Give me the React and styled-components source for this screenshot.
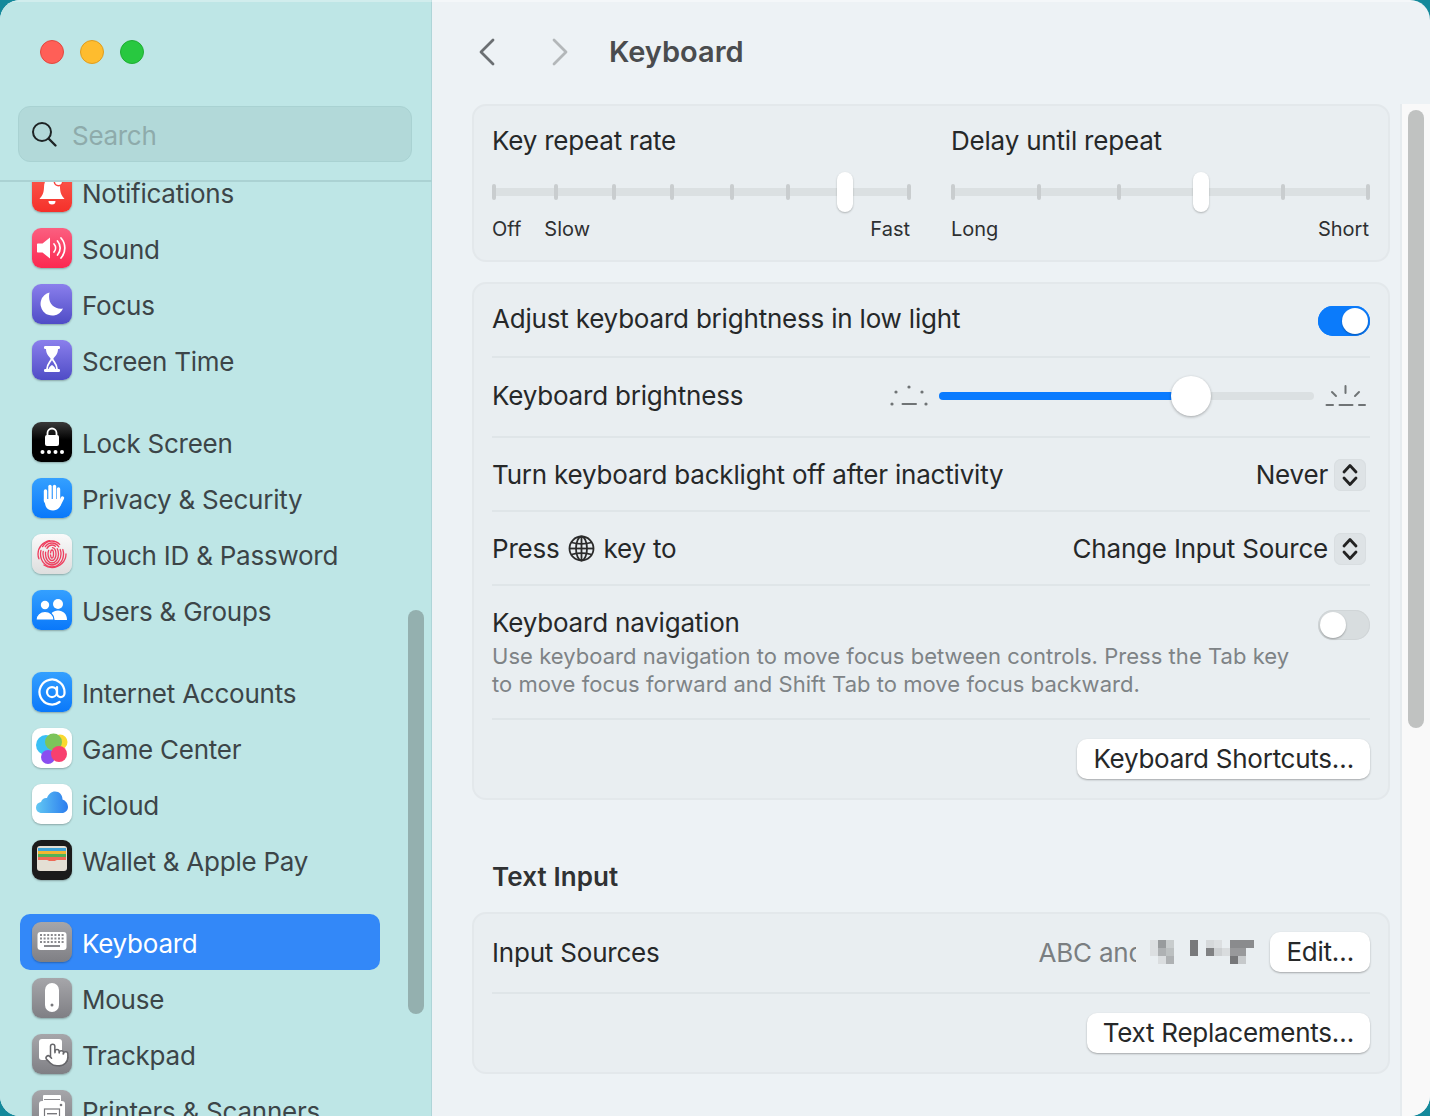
import styled, { createGlobalStyle } from 'styled-components'
import { AtSign, Pointer } from 'lucide-react'

const GlobalStyle = createGlobalStyle`
  html, body {
    margin: 0;
    padding: 0;
    background: #14899b;
    font-family: Inter, "Liberation Sans", sans-serif;
    -webkit-font-smoothing: antialiased;
  }
  * { box-sizing: border-box; }
`

// sidebar icon drawings, all on a 40x40 tile
const Svg = ({ children }) => <svg width="40" height="40" viewBox="0 0 40 40">{children}</svg>

const BellIcon = () => (
  <Svg>
    <path d="M20 5C14.500 5 12 10 12 15c0 6-2 9-4.500 12h25C30 24 28 21 28 15c0-5-2.500-10-8-10Z" fill="#fff" />
    <path d="M16.500 29h7a3.500 3.500 0 0 1-7 0Z" fill="#fff" />
    <circle cx="26.500" cy="9.500" r="4.200" fill="#fff" stroke="#f8443c" strokeWidth="1.500" />
  </Svg>
)
const SoundIcon = () => (
  <Svg>
    <path d="M6 15.500h4.500L18 9.500v21l-7.500-6H6c-.6 0-1-.4-1-1v-7c0-.6.4-1 1-1Z" fill="#fff" />
    <g fill="none" stroke="#fff" strokeWidth="1.700" strokeLinecap="round">
      <path d="M22 16a6 6 0 0 1 0 8" />
      <path d="M25.500 13a10.500 10.500 0 0 1 0 14" />
      <path d="M29 10a15 15 0 0 1 0 20" />
    </g>
  </Svg>
)
const MoonIcon = () => (
  <Svg>
    <path d="M17.500 8.500A11.700 11.700 0 1 0 31 24.500C23 26 15 20 17.500 8.500Z" fill="#fff" />
  </Svg>
)
const HourglassIcon = () => (
  <Svg>
    <rect x="12" y="6" width="16" height="3" rx="1.200" fill="#fff" />
    <rect x="12" y="29" width="16" height="3" rx="1.200" fill="#fff" />
    <path d="M14 9h12c0 6-4 8-5 10h-2c-1-2-5-4-5-10Z" fill="#fff" />
    <path d="M15 29c0-5 3.500-7 4.500-10h1c1 3 4.500 5 4.500 10" fill="none" stroke="#fff" strokeWidth="1.800" />
    <path d="M16.500 29c.5-2 2-3 3.500-4 1.500 1 3 2 3.500 4Z" fill="#fff" />
  </Svg>
)
const LockIcon = () => (
  <Svg>
    <path d="M15.500 14v-3a4.500 4.500 0 0 1 9 0v3" fill="none" stroke="#fff" strokeWidth="1.800" />
    <rect x="13" y="13" width="14" height="11" rx="2" fill="#fff" />
    {[10.500, 17, 23.500, 30].map(x => <circle key={x} cx={x} cy="30" r="2" fill="#fff" />)}
  </Svg>
)
const HandIcon = () => (
  <Svg>
    <g stroke="#fff" strokeWidth="3.400" strokeLinecap="round">
      <path d="M13.500 13v10" />
      <path d="M18 8.500v13" />
      <path d="M22.500 8.500v13" />
      <path d="M26.500 11v12" />
      <path d="M27 27l3.500-7" />
    </g>
    <path d="M11.800 21H28.500v5c0 4-3.500 6.500-7.500 6.500-4.500 0-6.500-2-7.500-5Z" fill="#fff" />
  </Svg>
)
const FingerprintIcon = () => (
  <Svg>
    <g fill="none" stroke="#ee3f5f" strokeWidth="1.300" strokeLinecap="round">
      <ellipse cx="20" cy="20" rx="1.500" ry="4" strokeDasharray="8 2" />
      <ellipse cx="20" cy="20" rx="4" ry="6.500" strokeDasharray="20 5" />
      <ellipse cx="20" cy="20" rx="6.500" ry="9" strokeDasharray="26 4 10 3" />
      <ellipse cx="20" cy="20" rx="9" ry="11" strokeDasharray="34 5 16 3" />
      <ellipse cx="20" cy="20" rx="11.500" ry="13" strokeDasharray="42 4 20 6" />
      <ellipse cx="20" cy="20" rx="14" ry="13.500" strokeDasharray="30 8 24 26" />
    </g>
  </Svg>
)
const UsersIcon = () => (
  <Svg>
    <circle cx="26" cy="14" r="5" fill="#fff" />
    <path d="M17 30c0-6 4-9.500 9-9.500s9 3.500 9 9.500Z" fill="#fff" />
    <circle cx="13" cy="15" r="4.200" fill="#fff" />
    <path d="M4 30c0-5.500 4-8.500 9-8.500s9 3 9 8.500Z" fill="#fff" stroke="#1484fd" strokeWidth="1.200" />
  </Svg>
)
const GameCenterIcon = () => (
  <Svg>
    <circle cx="14" cy="17" r="10" fill="#3ac0f5" />
    <circle cx="16" cy="29" r="7" fill="#8a4df0" />
    <circle cx="28" cy="14" r="7.500" fill="#f9d92f" />
    <circle cx="21.500" cy="14" r="8.500" fill="#7cc45a" />
    <circle cx="27" cy="26" r="8" fill="#f8406f" />
  </Svg>
)
const CloudIcon = () => (
  <Svg>
    <defs>
      <linearGradient id="cloud" x1="0" y1="0" x2="1" y2="0">
        <stop offset="0" stopColor="#62c8f3" />
        <stop offset="1" stopColor="#2c7dee" />
      </linearGradient>
    </defs>
    <path
      d="M10 29C6 29 4 26.500 4 23.500 4 20.500 6 18.500 9 18c1-3 3.500-4.500 6-4 1.500-4 4.500-6.500 8-6.500 4.500 0 7.500 3.500 7.500 8 3 1 5.500 4 5.500 7.500S33 29 30 29Z"
      fill="url(#cloud)"
    />
  </Svg>
)
const WalletIcon = () => (
  <Svg>
    <rect x="5" y="6" width="30" height="25" rx="3" fill="#e4dfd4" />
    <rect x="6" y="8" width="28" height="3" fill="#3fa4d8" />
    <rect x="6" y="11" width="28" height="3" fill="#f2b632" />
    <rect x="6" y="14" width="28" height="3" fill="#53b257" />
    <rect x="6" y="17" width="28" height="4" fill="#ee6a56" />
    <path d="M6 20h9c2 0 3 3.500 5 3.500s3-3.500 5-3.500h9v10H6Z" fill="#e4dfd4" />
  </Svg>
)
const KeyboardIcon = () => (
  <Svg>
    <rect x="5.500" y="10" width="29" height="18" rx="3" fill="#fff" />
    {[13, 16.500, 20].map(y =>
      [9, 12.600, 16.200, 19.800, 23.400, 27, 30.600].map(x => (
        <rect key={`${x}-${y}`} x={x - 1} y={y - 1} width="2" height="2" fill="#8a8a8e" />
      ))
    )}
    <rect x="12" y="23" width="16" height="2" fill="#8a8a8e" />
  </Svg>
)
const MouseIcon = () => (
  <Svg>
    <rect x="13" y="5" width="14" height="29" rx="7" fill="#fff" />
    <circle cx="20" cy="27" r="1.500" fill="#77777b" />
  </Svg>
)
const TrackpadIcon = () => (
  <Svg>
    <rect x="7" y="5" width="23" height="21" rx="3" fill="#fff" />
    <Pointer x="12" y="8" width="26" height="26" color="#66666a" fill="#fff" strokeWidth={1.400} />
  </Svg>
)
const PrinterIcon = () => (
  <Svg>
    <rect x="11" y="5" width="18" height="9" rx="1" fill="#fff" />
    <rect x="7" y="11" width="26" height="19" rx="3" fill="#fff" />
    <rect x="12" y="9" width="16" height="1" fill="#8a8a8e" />
    <rect x="12.500" y="19" width="15" height="14" fill="#fff" stroke="#77777b" strokeWidth="1.200" />
    <rect x="15" y="23" width="10" height="1.400" fill="#77777b" />
    <rect x="15" y="26.500" width="10" height="1.400" fill="#77777b" />
    <circle cx="29" cy="15" r="1.300" fill="#77777b" />
  </Svg>
)
const AtIcon = () => <AtSign size={30} color="#fff" strokeWidth={1.800} />

const grey = 'linear-gradient(#a6a6aa, #7f7f84)'
const blue = 'linear-gradient(#34a0ff, #0a78fa)'
const violet = 'linear-gradient(#8a7fec, #4f4cc6)'

const menuGroups = [
  [
    { label: 'Notifications', bg: 'linear-gradient(#fb5c4f, #f5302a)', Icon: BellIcon },
    { label: 'Sound', bg: 'linear-gradient(#fb5f80, #fc2850)', Icon: SoundIcon },
    { label: 'Focus', bg: violet, Icon: MoonIcon },
    { label: 'Screen Time', bg: violet, Icon: HourglassIcon }
  ],
  [
    { label: 'Lock Screen', bg: 'linear-gradient(#3a3a3a, #000 45%)', Icon: LockIcon },
    { label: 'Privacy & Security', bg: blue, Icon: HandIcon },
    { label: 'Touch ID & Password', bg: 'linear-gradient(#fafafa, #dedede)', Icon: FingerprintIcon },
    { label: 'Users & Groups', bg: blue, Icon: UsersIcon }
  ],
  [
    { label: 'Internet Accounts', bg: blue, Icon: AtIcon },
    { label: 'Game Center', bg: '#fff', Icon: GameCenterIcon },
    { label: 'iCloud', bg: '#fff', Icon: CloudIcon },
    { label: 'Wallet & Apple Pay', bg: '#1b1b1b', Icon: WalletIcon }
  ],
  [
    { label: 'Keyboard', bg: grey, Icon: KeyboardIcon, selected: true },
    { label: 'Mouse', bg: grey, Icon: MouseIcon },
    { label: 'Trackpad', bg: grey, Icon: TrackpadIcon },
    { label: 'Printers & Scanners', bg: grey, Icon: PrinterIcon }
  ]
]

const repeatSlider = { ticks: [2, 64, 122, 180, 240, 296, 417], thumb: 353 }
const delaySlider = { ticks: [2, 88, 168, 332, 417], thumb: 250 }

// blurred-out part of the input source name
const mosaic = [
  [0, 0, 1, 1, '#dcdfe1'], [1, 0, 1, 1, '#989b9d'], [2, 0, 1, 1, '#c8cccd'],
  [0, 1, 1, 1, '#dcdfe1'], [1, 1, 1, 1, '#aeb1b3'], [2, 1, 1, 1, '#bcc0c1'],
  [1, 2, 1, 1, '#dadddf'], [2, 2, 1, 1, '#aeb1b3'],
  [5, 0, 1, 2, '#78797b'],
  [7, 0, 1, 1, '#d5d8da'], [8, 0, 1, 1, '#dcdfe1'], [10, 0, 3, 1, '#8a8b8d'],
  [7, 1, 1, 1, '#808183'], [8, 1, 1, 1, '#cdd0d2'], [9, 1, 1, 1, '#d9dcde'], [10, 1, 2, 1, '#98999b'],
  [10, 2, 1, 1, '#767779'], [11, 2, 1, 1, '#c6c9cb']
]

const Chevron = ({ points, color }) => (
  <svg width="18" height="30" viewBox="0 0 18 30">
    <polyline points={points} fill="none" stroke={color} strokeWidth="2.800" strokeLinecap="round" strokeLinejoin="round" />
  </svg>
)

const UpDown = () => (
  <svg width="16" height="24" viewBox="0 0 16 24">
    <g fill="none" stroke="#222" strokeWidth="2.800" strokeLinecap="round" strokeLinejoin="round">
      <polyline points="2,9 8,2.500 14,9" />
      <polyline points="2,15 8,21.500 14,15" />
    </g>
  </svg>
)

const GlobeIcon = () => (
  <svg width="27" height="27" viewBox="0 0 27 27">
    <g fill="none" stroke="#2b2b2b" strokeWidth="1.800">
      <circle cx="13.500" cy="13.500" r="12" />
      <ellipse cx="13.500" cy="13.500" rx="5.500" ry="12" />
      <path d="M13.500 1.500v24" />
      <path d="M1.500 13.500h24" />
      <path d="M3.500 7.500c6 1.600 14 1.600 20 0" />
      <path d="M3.500 19.500c6-1.600 14-1.600 20 0" />
    </g>
  </svg>
)

const DimSun = () => (
  <svg width="40" height="24" viewBox="-2 0 40 24">
    <g fill="#6f7375">
      <circle cx="19" cy="3" r="1.600" />
      <circle cx="6" cy="8" r="1.600" />
      <circle cx="32" cy="8" r="1.600" />
      <circle cx="2" cy="20" r="1.600" />
      <circle cx="36" cy="20" r="1.600" />
      <rect x="11.500" y="19" width="15.500" height="2" rx="1" />
    </g>
  </svg>
)

const BrightSun = () => (
  <svg width="42" height="24" viewBox="0 0 42 24">
    <g stroke="#6f7375" strokeWidth="2" strokeLinecap="round" fill="none">
      <path d="M20.500 2v7" />
      <path d="M7 8l4 4" />
      <path d="M34 8l-4 4" />
      <path d="M1.500 21h6.500" />
      <path d="M14.500 21h13" />
      <path d="M34 21h6" />
    </g>
  </svg>
)

function TickSlider ({ ticks, thumb }) {
  return (
    <SliderBox>
      <TickTrack />
      {ticks.map(x => <Tick key={x} style={{ left: x }} />)}
      <TickThumb style={{ left: thumb }} />
    </SliderBox>
  )
}

export default function App () {
  const brightness = 252
  return (
    <>
      <GlobalStyle />
      <Window>
        <Sidebar>
          <Lights>
            <Light $color="#ff5f57" $edge="#e2483f" />
            <Light $color="#febc2e" $edge="#df9d1f" />
            <Light $color="#28c840" $edge="#1fae33" />
          </Lights>
          <SearchBox>
            <svg width="27" height="27" viewBox="0 0 27 27">
              <circle cx="11" cy="11" r="9" fill="none" stroke="#1e2425" strokeWidth="2" />
              <path d="M17.500 17.500l7 7" stroke="#1e2425" strokeWidth="2.400" strokeLinecap="round" />
            </svg>
            <SearchText>Search</SearchText>
          </SearchBox>
          <MenuScroll>
            {menuGroups.map((group, i) => (
              <MenuGroup key={i}>
                {group.map(({ label, bg, Icon, selected }) => (
                  <MenuItem key={label} $selected={selected}>
                    <IconTile $bg={bg}><Icon /></IconTile>
                    <MenuLabel>{label}</MenuLabel>
                  </MenuItem>
                ))}
              </MenuGroup>
            ))}
          </MenuScroll>
          <SideThumb />
        </Sidebar>

        <Main>
          <Header>
            <Chevron points="15,3 3,15 15,27" color="#6b6f72" />
            <Chevron points="3,3 15,15 3,27" color="#b3b7b9" />
            <Title>Keyboard</Title>
          </Header>
          <Body>
            <Content>
              <Panel $height={158}>
                <SliderGrid>
                  <div>
                    <SliderTitle>Key repeat rate</SliderTitle>
                    <TickSlider {...repeatSlider} />
                    <SliderLabels>
                      <LabelPair><span>Off</span><span>Slow</span></LabelPair>
                      <span>Fast</span>
                    </SliderLabels>
                  </div>
                  <div>
                    <SliderTitle>Delay until repeat</SliderTitle>
                    <TickSlider {...delaySlider} />
                    <SliderLabels>
                      <span>Long</span>
                      <span>Short</span>
                    </SliderLabels>
                  </div>
                </SliderGrid>
              </Panel>

              <Panel $gap={20}>
                <Row $height={74}>
                  <RowLabel $lift={4}>Adjust keyboard brightness in low light</RowLabel>
                  <Toggle $on $drop={2} />
                </Row>
                <Row $height={80}>
                  <RowLabel $lift={4}>Keyboard brightness</RowLabel>
                  <BrightnessControl>
                    <DimSun />
                    <BrightnessTrack>
                      <BrightnessFill style={{ width: brightness }} />
                      <BrightnessKnob style={{ left: brightness }} />
                    </BrightnessTrack>
                    <BrightSun />
                  </BrightnessControl>
                </Row>
                <Row $height={74}>
                  <RowLabel>Turn keyboard backlight off after inactivity</RowLabel>
                  <SelectValue>Never<Stepper><UpDown /></Stepper></SelectValue>
                </Row>
                <Row $height={74}>
                  <PressLabel>Press <GlobeIcon /> key to</PressLabel>
                  <SelectValue>Change Input Source<Stepper><UpDown /></Stepper></SelectValue>
                </Row>
                <NavRow>
                  <div>
                    <NavTitle>Keyboard navigation</NavTitle>
                    <NavText>
                      Use keyboard navigation to move focus between controls. Press the Tab key
                      to move focus forward and Shift Tab to move focus backward.
                    </NavText>
                  </div>
                  <Toggle />
                </NavRow>
                <Row $height={78} $last $end>
                  <PushButton>Keyboard Shortcuts…</PushButton>
                </Row>
              </Panel>

              <SectionTitle>Text Input</SectionTitle>

              <Panel>
                <Row $height={80}>
                  <RowLabel $lift={2}>Input Sources</RowLabel>
                  <SourceValue>
                    <SourceText>ABC and</SourceText>
                    <MosaicBox width="104" height="24" viewBox="0 0 104 24">
                      {mosaic.map(([x, y, w, h, fill]) => (
                        <rect key={`${x}-${y}`} x={x * 8} y={y * 8} width={w * 8} height={h * 8} fill={fill} />
                      ))}
                    </MosaicBox>
                    <PushButton>Edit…</PushButton>
                  </SourceValue>
                </Row>
                <Row $height={78} $last $end>
                  <PushButton>Text Replacements…</PushButton>
                </Row>
              </Panel>
            </Content>
            <ScrollTrack>
              <ScrollThumb />
            </ScrollTrack>
          </Body>
        </Main>
      </Window>
    </>
  )
}

const Window = styled.div`
  display: flex;
  width: 1430px;
  height: 1116px;
  overflow: hidden;
  border-radius: 20px;
  background: #edf2f5;
`
const Sidebar = styled.aside`
  position: relative;
  display: flex;
  flex-direction: column;
  flex: 0 0 432px;
  background: #bee6e6;
  box-shadow: inset 0 2px 0 rgba(255, 255, 255, 0.3), inset -1px 0 0 #aed5d8;
`
const Lights = styled.div`
  display: flex;
  gap: 16px;
  padding: 40px 0 0 40px;
`
const Light = styled.span`
  width: 24px;
  height: 24px;
  border-radius: 50%;
  background: ${p => p.$color};
  border: 1px solid ${p => p.$edge};
`
const SearchBox = styled.div`
  display: flex;
  align-items: center;
  gap: 14px;
  width: 394px;
  height: 56px;
  margin: 42px 0 0 18px;
  padding: 0 14px 0 12px;
  background: #b2d9d9;
  border: 1px solid #a9d2d2;
  border-radius: 12px;
`
const SearchText = styled.span`
  margin-top: 2px;
  font-size: 26px;
  letter-spacing: -0.3px;
  color: #8eabab;
`
const MenuScroll = styled.nav`
  flex: 1;
  min-height: 0;
  margin-top: 18px;
  overflow: hidden;
  border-top: 2px solid #abd2d3;
`
const MenuGroup = styled.div`
  margin: 0 0 26px 20px;
  &:first-child {
    margin-top: -18px;
  }
`
const MenuItem = styled.div`
  display: flex;
  align-items: center;
  gap: 10px;
  width: 360px;
  height: 56px;
  padding-left: 12px;
  border-radius: 10px;
  font-size: 26px;
  letter-spacing: -0.24px;
  color: ${p => (p.$selected ? '#fff' : '#3c4548')};
  background: ${p => (p.$selected ? '#3388f8' : 'transparent')};
`
const MenuLabel = styled.span`
  margin-top: 2px;
  white-space: nowrap;
`
const IconTile = styled.span`
  display: flex;
  align-items: center;
  justify-content: center;
  flex: none;
  width: 40px;
  height: 40px;
  border-radius: 9px;
  background: ${p => p.$bg};
  box-shadow: 0 1px 2px rgba(0, 0, 0, 0.28);
`
const SideThumb = styled.div`
  position: absolute;
  top: 610px;
  left: 408px;
  width: 16px;
  height: 404px;
  border-radius: 8px;
  background: #94b0af;
`
const Main = styled.main`
  display: flex;
  flex-direction: column;
  flex: 1;
  min-width: 0;
  box-shadow: inset 0 2px 0 rgba(255, 255, 255, 0.4);
`
const Header = styled.header`
  display: flex;
  align-items: center;
  flex: 0 0 104px;
  gap: 55px;
  padding: 0 0 0 46px;
`
const Title = styled.h1`
  margin: -2px 0 0 -15px;
  font-size: 29px;
  font-weight: 600;
  letter-spacing: 0;
  color: #4a4c4e;
`
const Body = styled.div`
  display: flex;
  flex: 1;
  min-height: 0;
`
const Content = styled.div`
  flex: 1;
  padding-left: 40px;
`
const Panel = styled.section`
  width: 918px;
  height: ${p => (p.$height ? `${p.$height}px` : 'auto')};
  margin-top: ${p => p.$gap || 0}px;
  padding: 0 18px;
  background: #e9eef1;
  border: 2px solid #e3e8eb;
  border-radius: 14px;
`
const SliderGrid = styled.div`
  display: grid;
  grid-template-columns: 418px 418px;
  column-gap: 41px;
  padding-top: 20px;
`
const SliderTitle = styled.div`
  height: 30px;
  font-size: 26px;
  line-height: 30px;
  letter-spacing: -0.2px;
  color: #262829;
`
const SliderBox = styled.div`
  position: relative;
  height: 40px;
  margin-top: 16px;
`
const TickTrack = styled.div`
  position: absolute;
  top: 16px;
  left: 0;
  right: 0;
  height: 8px;
  background: #dbe0e2;
`
const Tick = styled.span`
  position: absolute;
  top: 12px;
  width: 4px;
  height: 16px;
  margin-left: -2px;
  border-radius: 2px;
  background: #c9cdcf;
`
const TickThumb = styled.span`
  position: absolute;
  top: 0;
  width: 16px;
  height: 40px;
  margin-left: -8px;
  border-radius: 8px;
  background: #fff;
  box-shadow: 0 1px 2px rgba(0, 0, 0, 0.25);
`
const SliderLabels = styled.div`
  display: flex;
  justify-content: space-between;
  margin-top: 5px;
  font-size: 20px;
  line-height: 24px;
  color: #2e3031;
`
const LabelPair = styled.div`
  display: flex;
  gap: 23px;
`
const Row = styled.div`
  display: flex;
  align-items: center;
  justify-content: ${p => (p.$end ? 'flex-end' : 'space-between')};
  height: ${p => p.$height}px;
  border-bottom: ${p => (p.$last ? 'none' : '2px solid #dfe5e8')};
  font-size: 26px;
  letter-spacing: -0.2px;
  color: #262829;
`
const RowLabel = styled.span`
  margin-bottom: ${p => p.$lift || 0}px;
`
const Toggle = styled.span`
  position: relative;
  flex: none;
  width: 52px;
  height: 30px;
  margin-top: ${p => p.$drop || 0}px;
  border-radius: 15px;
  background: ${p => (p.$on ? '#0b7bfb' : '#d8dddf')};
  box-shadow: inset 0 0 0 1px ${p => (p.$on ? '#0b7bfb' : '#d0d5d7')};
  &::after {
    content: '';
    position: absolute;
    top: 2px;
    ${p => (p.$on ? 'right: 2px;' : 'left: 2px;')}
    width: 26px;
    height: 26px;
    border-radius: 50%;
    background: #fff;
    box-shadow: 0 1px 2px rgba(0, 0, 0, 0.3);
  }
`
const BrightnessControl = styled.div`
  display: flex;
  align-items: center;
  gap: 11px;
  margin: 0 3px 2px 0;
`
const BrightnessTrack = styled.div`
  position: relative;
  width: 375px;
  height: 8px;
  border-radius: 4px;
  background: #dbe0e2;
`
const BrightnessFill = styled.div`
  height: 100%;
  border-radius: 4px 0 0 4px;
  background: #0a7bff;
`
const BrightnessKnob = styled.span`
  position: absolute;
  top: -16px;
  width: 40px;
  height: 40px;
  margin-left: -20px;
  border-radius: 50%;
  background: #fff;
  box-shadow: 0 1px 3px rgba(0, 0, 0, 0.3);
`
const SelectValue = styled.div`
  display: flex;
  align-items: center;
  gap: 6px;
  margin-right: 4px;
`
const Stepper = styled.span`
  display: flex;
  align-items: center;
  justify-content: center;
  width: 32px;
  height: 32px;
  margin-top: 2px;
  border-radius: 7px;
  background: #dee3e6;
  box-shadow: inset 0 0 0 1px #d9dee1;
`
const PressLabel = styled.span`
  display: inline-flex;
  align-items: center;
  gap: 8px;
  svg {
    margin-right: 1px;
  }
`
const NavRow = styled.div`
  display: flex;
  align-items: flex-start;
  justify-content: space-between;
  height: 134px;
  padding-top: 24px;
  border-bottom: 2px solid #dfe5e8;
`
const NavTitle = styled.div`
  height: 30px;
  margin-top: -2px;
  font-size: 26px;
  line-height: 30px;
  letter-spacing: -0.2px;
  color: #262829;
`
const NavText = styled.p`
  width: 820px;
  margin: 4px 0 0;
  font-size: 22px;
  line-height: 28px;
  letter-spacing: 0.04px;
  color: #7e8386;
`
const PushButton = styled.button`
  height: 40px;
  padding: 0 16px 2px;
  border: none;
  border-radius: 10px;
  background: #fff;
  box-shadow: 0 1px 2px rgba(0, 0, 0, 0.3);
  font-family: inherit;
  font-size: 26px;
  letter-spacing: -0.26px;
  color: #262829;
`
const SectionTitle = styled.h2`
  height: 30px;
  margin: 62px 0 20px 20px;
  font-size: 26px;
  font-weight: 600;
  line-height: 30px;
  letter-spacing: 0.1px;
  color: #303233;
`
const SourceValue = styled.div`
  display: flex;
  align-items: center;
  margin-bottom: 2px;
`
const SourceText = styled.span`
  width: 98px;
  margin-right: 14px;
  overflow: hidden;
  white-space: nowrap;
  color: #7a7e81;
`
const MosaicBox = styled.svg`
  margin-right: 16px;
`
const ScrollTrack = styled.div`
  flex: 0 0 30px;
  padding: 6px 6px 0 6px;
  background: #f9f9f9;
  border-left: 2px solid #e6ebee;
`
const ScrollThumb = styled.div`
  width: 16px;
  height: 618px;
  border-radius: 8px;
  background: #c0c2c1;
`
